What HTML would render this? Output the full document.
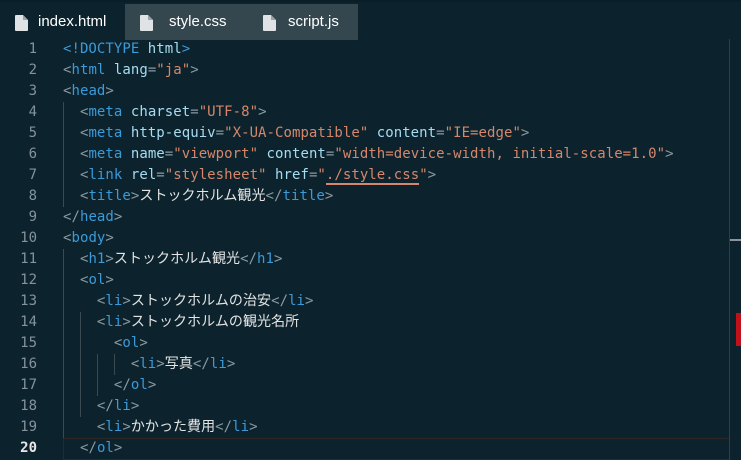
<!DOCTYPE html>
<html><head><meta charset="utf-8"><style>
*{margin:0;padding:0;box-sizing:border-box}
body{width:741px;height:460px;background:#0c232e;overflow:hidden;position:relative;font-family:"DejaVu Sans Mono","Noto Sans CJK JP",monospace;}
.tabs{position:absolute;left:0;top:0;width:741px;height:39px;background:#0c232e;border-top:2px solid #0a1e27}
.tab{position:absolute;top:2px;height:36px;color:#fff;font:15px "Liberation Sans",sans-serif;line-height:36px}
.tab svg{position:absolute;left:15px;top:11px}
.tab span{position:absolute;left:38px}
.inact{background:#34474f}
.ln{position:absolute;left:0;width:37px;text-align:right;color:#85939a;font-size:14px;height:21px;line-height:21px}
.cl{position:absolute;left:63px;font-size:14px;height:21px;line-height:21px;white-space:pre;color:#e4e4e4;letter-spacing:0.05px}
.b{color:#8a9aa1}.t{color:#3b9ad8}.a{color:#a6dcf0}.s{color:#d6876b}
.g{position:absolute;width:1px;background:#3b4a50}
</style></head><body>
<div class="tabs">
<div class="tab" style="left:0;width:125px"><svg width="13" height="16" viewBox="0 0 13 16"><path d="M1 0H8L13 5V15Q13 16 12 16H1Q0 16 0 15V1Q0 0 1 0Z" fill="#dfe3e5"/><path d="M8 0V5H13Z" fill="#9aa3a7"/></svg><span>index.html</span></div>
<div class="tab inact" style="left:125px;width:120px"><svg width="13" height="16" viewBox="0 0 13 16"><path d="M1 0H8L13 5V15Q13 16 12 16H1Q0 16 0 15V1Q0 0 1 0Z" fill="#dfe3e5"/><path d="M8 0V5H13Z" fill="#9aa3a7"/></svg><span style="left:44px">style.css</span></div>
<div class="tab inact" style="left:245px;width:113px"><svg width="13" height="16" viewBox="0 0 13 16" style="left:18px"><path d="M1 0H8L13 5V15Q13 16 12 16H1Q0 16 0 15V1Q0 0 1 0Z" fill="#dfe3e5"/><path d="M8 0V5H13Z" fill="#9aa3a7"/></svg><span style="left:43px">script.js</span></div>
</div>
<div style="position:absolute;left:729px;top:39px;width:1px;height:421px;background:#2d4049"></div>
<div style="position:absolute;left:730px;top:239px;width:11px;height:2px;background:#8a9499"></div>
<div style="position:absolute;left:736px;top:313px;width:5px;height:33px;background:#c0101a"></div>
<div style="position:absolute;left:63px;top:438px;width:666px;height:22px;border:1px solid #2c2825;border-right:none"></div>
<div class="g" style="left:63px;top:102px;height:105px"></div>
<div class="g" style="left:63px;top:249px;height:189px"></div>
<div class="g" style="left:80px;top:312px;height:105px"></div>
<div class="g" style="left:97px;top:354px;height:42px"></div>
<div class="g" style="left:114px;top:354px;height:21px"></div>

<div class="ln" style="top:39px">1</div><div class="cl" style="top:39px"><span class="t">&lt;!DOCTYPE</span> <span class="a">html</span><span class="t">&gt;</span></div>
<div class="ln" style="top:60px">2</div><div class="cl" style="top:60px"><span class="b">&lt;</span><span class="t">html</span> <span class="a">lang</span><span class="b">=</span><span class="s">"ja"</span><span class="b">&gt;</span></div>
<div class="ln" style="top:81px">3</div><div class="cl" style="top:81px"><span class="b">&lt;</span><span class="t">head</span><span class="b">&gt;</span></div>
<div class="ln" style="top:102px">4</div><div class="cl" style="top:102px">  <span class="b">&lt;</span><span class="t">meta</span> <span class="a">charset</span><span class="b">=</span><span class="s">"UTF-8"</span><span class="b">&gt;</span></div>
<div class="ln" style="top:123px">5</div><div class="cl" style="top:123px">  <span class="b">&lt;</span><span class="t">meta</span> <span class="a">http-equiv</span><span class="b">=</span><span class="s">"X-UA-Compatible"</span> <span class="a">content</span><span class="b">=</span><span class="s">"IE=edge"</span><span class="b">&gt;</span></div>
<div class="ln" style="top:144px">6</div><div class="cl" style="top:144px">  <span class="b">&lt;</span><span class="t">meta</span> <span class="a">name</span><span class="b">=</span><span class="s">"viewport"</span> <span class="a">content</span><span class="b">=</span><span class="s">"width=device-width, initial-scale=1.0"</span><span class="b">&gt;</span></div>
<div class="ln" style="top:165px">7</div><div class="cl" style="top:165px">  <span class="b">&lt;</span><span class="t">link</span> <span class="a">rel</span><span class="b">=</span><span class="s">"stylesheet"</span> <span class="a">href</span><span class="b">=</span><span class="s">"<span style="border-bottom:2px solid #d6876b">./style.css</span>"</span><span class="b">&gt;</span></div>
<div class="ln" style="top:186px">8</div><div class="cl" style="top:186px">  <span class="b">&lt;</span><span class="t">title</span><span class="b">&gt;</span>ストックホルム観光<span class="b">&lt;/</span><span class="t">title</span><span class="b">&gt;</span></div>
<div class="ln" style="top:207px">9</div><div class="cl" style="top:207px"><span class="b">&lt;/</span><span class="t">head</span><span class="b">&gt;</span></div>
<div class="ln" style="top:228px">10</div><div class="cl" style="top:228px"><span class="b">&lt;</span><span class="t">body</span><span class="b">&gt;</span></div>
<div class="ln" style="top:249px">11</div><div class="cl" style="top:249px">  <span class="b">&lt;</span><span class="t">h1</span><span class="b">&gt;</span>ストックホルム観光<span class="b">&lt;/</span><span class="t">h1</span><span class="b">&gt;</span></div>
<div class="ln" style="top:270px">12</div><div class="cl" style="top:270px">  <span class="b">&lt;</span><span class="t">ol</span><span class="b">&gt;</span></div>
<div class="ln" style="top:291px">13</div><div class="cl" style="top:291px">    <span class="b">&lt;</span><span class="t">li</span><span class="b">&gt;</span>ストックホルムの治安<span class="b">&lt;/</span><span class="t">li</span><span class="b">&gt;</span></div>
<div class="ln" style="top:312px">14</div><div class="cl" style="top:312px">    <span class="b">&lt;</span><span class="t">li</span><span class="b">&gt;</span>ストックホルムの観光名所</div>
<div class="ln" style="top:333px">15</div><div class="cl" style="top:333px">      <span class="b">&lt;</span><span class="t">ol</span><span class="b">&gt;</span></div>
<div class="ln" style="top:354px">16</div><div class="cl" style="top:354px">        <span class="b">&lt;</span><span class="t">li</span><span class="b">&gt;</span>写真<span class="b">&lt;/</span><span class="t">li</span><span class="b">&gt;</span></div>
<div class="ln" style="top:375px">17</div><div class="cl" style="top:375px">      <span class="b">&lt;/</span><span class="t">ol</span><span class="b">&gt;</span></div>
<div class="ln" style="top:396px">18</div><div class="cl" style="top:396px">    <span class="b">&lt;/</span><span class="t">li</span><span class="b">&gt;</span></div>
<div class="ln" style="top:417px">19</div><div class="cl" style="top:417px">    <span class="b">&lt;</span><span class="t">li</span><span class="b">&gt;</span>かかった費用<span class="b">&lt;/</span><span class="t">li</span><span class="b">&gt;</span></div>
<div class="ln" style="top:438px;color:#e8e8e8;font-weight:bold">20</div><div class="cl" style="top:438px">  <span class="b">&lt;/</span><span class="t">ol</span><span class="b">&gt;</span></div>
</body></html>
